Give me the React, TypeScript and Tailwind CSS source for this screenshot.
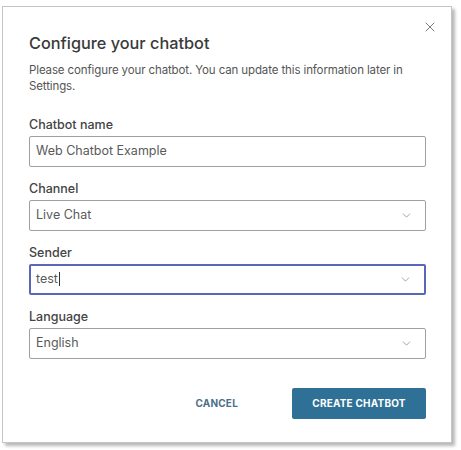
import { X, ChevronDown } from 'lucide-react';

function Field({ label, value, select, focused }: { label: string; value: string; select?: boolean; focused?: boolean }) {
  return (
    <div className="flex flex-col">
      <div className="text-[12.5px] font-medium text-[#444] leading-4 mb-[3px]">{label}</div>
      <div
        className={
          'h-[31px] rounded-[2px] flex items-center pr-[12px] bg-white ' +
          (focused ? 'border-2 border-[#5a67b8] pl-[5px]' : 'border border-[#a0a0a0] pl-[6px]')
        }
      >
        <span className="flex-1 text-[12.5px] text-[#5a5a5a]">
          {value}
          {focused && <span className="inline-block w-px h-[14px] bg-[#333] align-middle ml-px -mt-[2px]" />}
        </span>
        {select && <ChevronDown size={13} strokeWidth={1.4} className="text-[#888]" />}
      </div>
    </div>
  );
}

export default function App() {
  return (
    <div className="w-[461px] h-[450px] bg-white pt-[6px] pl-[2px]" style={{ fontFamily: 'Inter, "Noto Sans", sans-serif' }}>
      <div className="relative w-[450px] h-[437px] bg-white border border-[#c4c4c4] shadow-[3px_3px_3px_rgba(0,0,0,0.28)] pl-[26px] pr-[25px] pt-[26px]">
        <button className="absolute right-[13px] top-[12px] text-[#666]" aria-label="Close">
          <X size={16} strokeWidth={1.3} />
        </button>
        <h1 className="text-[16.3px] font-medium text-[#3a3a3a] leading-5">Configure your chatbot</h1>
        <p className="mt-[9px] text-[11.5px] tracking-[-0.12px] text-[#555] leading-4 whitespace-nowrap">
          Please configure your chatbot. You can update this information later in
          <br />
          Settings.
        </p>
        <div className="mt-[23px] flex flex-col gap-[14px]">
          <Field label="Chatbot name" value="Web Chatbot Example" />
          <Field label="Channel" value="Live Chat" select />
          <Field label="Sender" value="test" select focused />
          <Field label="Language" value="English" select />
        </div>
        <div className="mt-[29px] flex justify-end items-center gap-[54px]">
          <button className="text-[10px] font-bold tracking-[0.2px] text-[#4b7189]">CANCEL</button>
          <button className="w-[134px] h-[31px] rounded-[2px] bg-[#2f7196] text-white text-[10px] font-bold tracking-[0.2px]">
            CREATE CHATBOT
          </button>
        </div>
      </div>
    </div>
  );
}
